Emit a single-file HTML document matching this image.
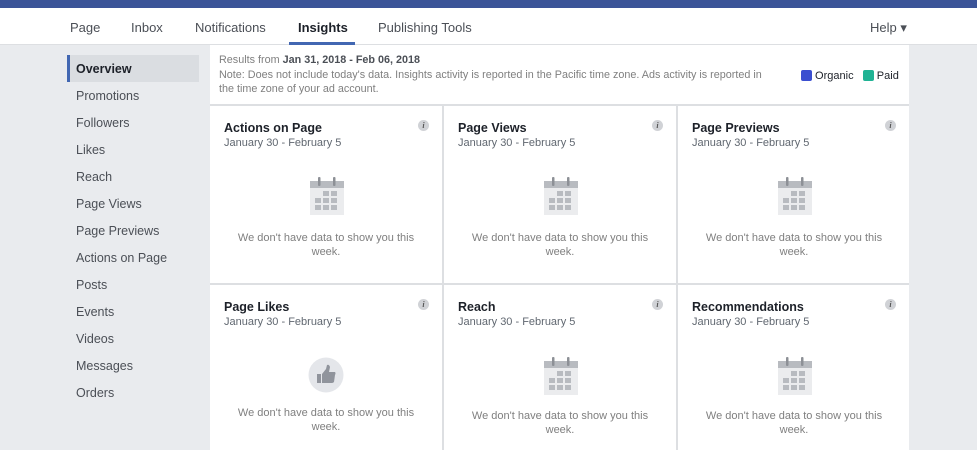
<!DOCTYPE html>
<html><head><style>
*{margin:0;padding:0;box-sizing:border-box}
body{width:977px;height:450px;overflow:hidden;background:#e9ebee;font-family:"Liberation Sans",Helvetica,sans-serif;position:relative;color:#1d2129}
.top{position:absolute;left:0;top:0;width:977px;height:8px;background:#3b5498}
.nav{position:absolute;left:0;top:8px;width:977px;height:37px;background:#fff;border-bottom:1px solid #dddfe2}
.nav span{position:absolute;top:12px;font-size:13px;color:#4b4f56}
.nav .act{color:#1d2129;font-weight:bold}
.uline{position:absolute;left:289px;top:42px;width:66px;height:3px;background:#4267b2}
.side{position:absolute;left:76px;font-size:12.5px;color:#4b4f56}
.sel{position:absolute;left:67px;top:55px;width:132px;height:27px;background:#dadde1;border-left:3px solid #4267b2}
.panel{position:absolute;left:210px;top:45px;width:699px;height:405px;background:#dddfe2}
.hdr{position:absolute;left:0;top:0;width:699px;height:59px;background:#fff;font-size:10.8px;color:#7f7f7f;padding:8px 9px;line-height:14.5px}
.hdr .t{white-space:nowrap}
.hdr b{color:#4b4f56}
.card{position:absolute;background:#fff;width:232px}
.card h4{position:absolute;left:14px;top:15px;font-size:12.5px;color:#1d2129}
.card .d{position:absolute;left:14px;top:31px;font-size:11px;color:#606770}
.card .i{position:absolute;right:13px;top:14px;width:11px;height:11px;border-radius:50%;background:#d0d2d6;font-size:8px;color:#555;text-align:center;line-height:11px;font-style:italic;font-weight:bold;font-family:"Liberation Serif",serif}
.card .m{position:absolute;left:0;width:232px;text-align:center;font-size:11px;color:#7f7f7f;line-height:13.5px;padding:0 20px}
.cal{position:absolute;left:100px;width:34px;height:38px}
</style></head><body>
<div class="top"></div>
<div class="nav">
<span style="left:70px">Page</span><span style="left:131px">Inbox</span><span style="left:195px">Notifications</span><span class="act" style="left:298px">Insights</span><span style="left:378px">Publishing Tools</span><span style="left:870px;color:#4b4f56">Help ▾</span>
</div>
<div class="uline"></div>
<div class="sel"></div>
<div class="side" style="top:62px;color:#1d2129;font-weight:bold">Overview</div>
<div class="side" style="top:89px">Promotions</div>
<div class="side" style="top:116px">Followers</div>
<div class="side" style="top:143px">Likes</div>
<div class="side" style="top:170px">Reach</div>
<div class="side" style="top:197px">Page Views</div>
<div class="side" style="top:224px">Page Previews</div>
<div class="side" style="top:251px">Actions on Page</div>
<div class="side" style="top:278px">Posts</div>
<div class="side" style="top:305px">Events</div>
<div class="side" style="top:332px">Videos</div>
<div class="side" style="top:359px">Messages</div>
<div class="side" style="top:386px">Orders</div>
<div class="panel">
<div class="hdr"><div class="t">Results from <b>Jan 31, 2018 - Feb 06, 2018</b><br>Note: Does not include today's data. Insights activity is reported in the Pacific time zone. Ads activity is reported in<br>the time zone of your ad account.</div>
<div style="position:absolute;left:591px;top:24px;font-size:11px;color:#1d2129"><span style="display:inline-block;width:11px;height:11px;background:#3b4fd0;border-radius:2px;vertical-align:-2px"></span> Organic &nbsp;&nbsp;<span style="display:inline-block;width:11px;height:11px;background:#20b394;border-radius:2px;vertical-align:-2px"></span> Paid</div></div>
</div>
<svg width="0" height="0" style="position:absolute"><defs><g id="c"><rect x="0" y="4" width="34" height="34" fill="#ebecee"/><rect x="0" y="4" width="34" height="7" fill="#b8bbc0"/><rect x="8" y="0" width="2.5" height="9" rx="1" fill="#8d9096"/><rect x="23" y="0" width="2.5" height="9" rx="1" fill="#8d9096"/><g fill="#b8bbc0"><rect x="13" y="14" width="6" height="5"/><rect x="21" y="14" width="6" height="5"/><rect x="5" y="21" width="6" height="5"/><rect x="13" y="21" width="6" height="5"/><rect x="21" y="21" width="6" height="5"/><rect x="5" y="28" width="6" height="5"/><rect x="13" y="28" width="6" height="5"/><rect x="21" y="28" width="6" height="5"/></g></g></defs></svg>
<div class="card" style="left:210px;top:106px;height:177px"><h4>Actions on Page</h4><div class="d">January 30 - February 5</div><div class="i">i</div><svg class="cal" style="top:71px"><use href="#c"/></svg><div class="m" style="top:126px">We don't have data to show you this week.</div></div>
<div class="card" style="left:444px;top:106px;height:177px"><h4>Page Views</h4><div class="d">January 30 - February 5</div><div class="i">i</div><svg class="cal" style="top:71px"><use href="#c"/></svg><div class="m" style="top:126px">We don't have data to show you this week.</div></div>
<div class="card" style="left:678px;top:106px;height:177px;width:231px"><h4>Page Previews</h4><div class="d">January 30 - February 5</div><div class="i">i</div><svg class="cal" style="top:71px"><use href="#c"/></svg><div class="m" style="top:126px">We don't have data to show you this week.</div></div>
<div class="card" style="left:210px;top:285px;height:165px"><h4>Page Likes</h4><div class="d">January 30 - February 5</div><div class="i">i</div>
<svg style="position:absolute;left:98px;top:72px" width="36" height="36"><circle cx="18" cy="18" r="17.5" fill="#e4e6ea"/><rect x="9" y="17" width="4" height="9" fill="#90949c"/><path d="M14 17 L18 12 L19 8 Q21 7 22 10 L21 15 L27 15 Q28 16 27 18 L26 25 Q25 26 24 26 L14 26 Z" fill="#90949c"/></svg>
<div class="m" style="top:122px">We don't have data to show you this week.</div></div>
<div class="card" style="left:444px;top:285px;height:165px"><h4>Reach</h4><div class="d">January 30 - February 5</div><div class="i">i</div><svg class="cal" style="top:72px"><use href="#c"/></svg><div class="m" style="top:125px">We don't have data to show you this week.</div></div>
<div class="card" style="left:678px;top:285px;height:165px;width:231px"><h4>Recommendations</h4><div class="d">January 30 - February 5</div><div class="i">i</div><svg class="cal" style="top:72px"><use href="#c"/></svg><div class="m" style="top:125px">We don't have data to show you this week.</div></div>
</body></html>
